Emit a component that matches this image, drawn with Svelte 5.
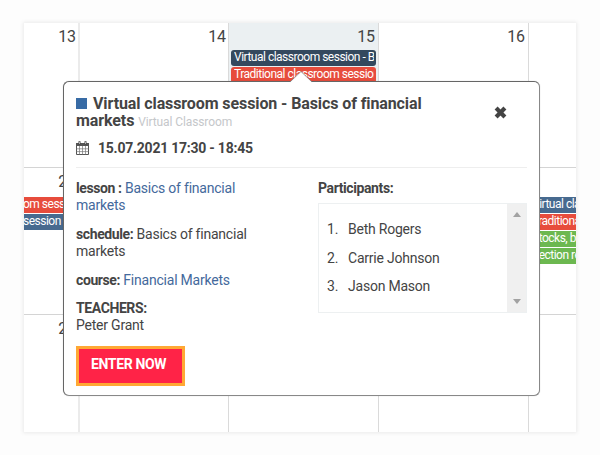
<script lang="ts">
  type CalendarEvent = { title: string; kind: 'session' | 'classroom' | 'webinar' | 'course' };
  type Day = { label: string; today?: boolean; events: CalendarEvent[] };

  const weeks: Day[][] = [
    [
      { label: '13', events: [] },
      { label: '14', events: [] },
      {
        label: '15',
        today: true,
        events: [
          { title: 'Virtual classroom session - Basics', kind: 'session' },
          { title: 'Traditional classroom session', kind: 'classroom' }
        ]
      },
      { label: '16', events: [] },
      { label: '', events: [] }
    ],
    [
      {
        label: '20',
        events: [
          { title: 'om session', kind: 'classroom' },
          { title: 'session - B', kind: 'webinar' }
        ]
      },
      { label: '', events: [] },
      { label: '', events: [] },
      { label: '', events: [] },
      {
        label: '',
        events: [
          { title: 'Virtual classroom', kind: 'webinar' },
          { title: 'Traditional', kind: 'classroom' },
          { title: 'Stocks, bonds', kind: 'course' },
          { title: 'Section review', kind: 'course' }
        ]
      }
    ],
    [
      { label: '27', events: [] },
      { label: '', events: [] },
      { label: '', events: [] },
      { label: '', events: [] },
      { label: '', events: [] }
    ]
  ];

  const participants = ['Beth Rogers', 'Carrie Johnson', 'Jason Mason'];

  let open = true;
</script>

<main>
  <div class="calendar">
    <div class="grid">
      {#each weeks as week}
        {#each week as day}
          <div class="day" class:today={day.today}>
            <div class="number">{day.label}</div>
            {#each day.events as event}
              <div class="event {event.kind}"><span>{event.title}</span></div>
            {/each}
          </div>
        {/each}
      {/each}
    </div>

    {#if open}
      <section class="popup">
        <svg class="caret" width="24" height="12" viewBox="0 0 24 12">
          <path d="M0 12 L1 11 L12 .5 L23 11 L24 12 Z" fill="#fff" />
          <path d="M1 11 L12 .5 L23 11" fill="none" stroke="#777" stroke-width=".7" />
        </svg>

        <header>
          <h2>
            <i class="swatch"></i>Virtual classroom session - Basics of financial markets
            <small>Virtual Classroom</small>
          </h2>
          <button class="close" aria-label="Close" on:click={() => (open = false)}>
            <svg width="13" height="13" viewBox="0 0 13 13">
              <path d="M2.1 2.1 L10.9 10.9 M10.9 2.1 L2.1 10.9" stroke="#444" stroke-width="4.2" />
            </svg>
          </button>
        </header>

        <div class="date">
          <svg width="13" height="14" viewBox="0 0 13 14">
            <path d="M.5 2.5h12v11H.5z" fill="#fff" stroke="#555" />
            <path d="M0 2h13v3H0z" fill="#555" />
            <path d="M3.5 5v8.5M6.5 5v8.5M9.5 5v8.5M.5 7.8h12M.5 10.6h12" stroke="#777" stroke-width=".7" />
            <path d="M3.5 .3v3.2M9.5 .3v3.2" stroke="#444" stroke-width="2" />
            <path d="M3.5 1v2M9.5 1v2" stroke="#ddd" stroke-width=".7" />
          </svg>
          <strong>15.07.2021 17:30 - 18:45</strong>
        </div>

        <div class="content">
          <div class="details">
            <p><strong>lesson :</strong> <a href="#lesson">Basics of financial markets</a></p>
            <p><strong>schedule:</strong> Basics of financial markets</p>
            <p class="course-name"><strong>course:</strong> <a href="#course">Financial Markets</a></p>
            <p><strong>TEACHERS:</strong><br />Peter Grant</p>
            <button class="enter">ENTER NOW</button>
          </div>

          <div class="participants">
            <strong>Participants:</strong>
            <div class="list">
              <ol>
                {#each participants as name, i}
                  <li><span>{i + 1}.</span>{name}</li>
                {/each}
              </ol>
              <div class="scrollbar">
                <i class="up"></i>
                <i class="down"></i>
              </div>
            </div>
          </div>
        </div>
      </section>
    {/if}
  </div>
</main>

<style>
  :global(body) {
    background: #fdfdfd;
  }

  main {
    box-sizing: border-box;
    height: 455px;
    padding: 23px 24px;
    overflow: hidden;
    font-family: Roboto, sans-serif;
    color: #444;
  }

  .calendar {
    position: relative;
    width: 552px;
    height: 409px;
    background: #fff;
    box-shadow: 0 0 4px 1px rgba(0, 0, 0, 0.08);
  }

  .grid {
    display: grid;
    grid-template-columns: 56px 149px 150px 150px 47px;
    grid-template-rows: 145px 147px 117px;
    height: 100%;
    overflow: hidden;
  }

  .day {
    box-sizing: border-box;
    min-width: 0;
    padding: 4px 2px 0;
    border-right: 1px solid #dadada;
    border-bottom: 1px solid #d4d4d4;
  }

  .day:nth-child(5n + 1) {
    padding-left: 0;
    border-right: 2px solid #ebebeb;
  }

  .day:nth-child(5n) {
    padding-right: 0;
    border-right: 0;
  }

  .day:nth-child(n + 11) {
    border-bottom: 0;
  }

  .day.today {
    background: #ebf0f2;
  }

  .number {
    height: 19px;
    margin-bottom: 4px;
    font-size: 16px;
    letter-spacing: -0.1px;
    line-height: 19px;
    text-align: right;
  }

  .day:nth-child(5n + 3) .number,
  .day:nth-child(5n + 4) .number {
    padding-right: 1px;
  }

  .day:nth-child(n + 6) .number {
    margin-bottom: 6px;
  }

  .event {
    height: 16px;
    margin-bottom: 1px;
    padding: 0 2px 0 3px;
    overflow: hidden;
    border-radius: 3px;
    color: #fff;
    font-size: 12px;
    letter-spacing: -0.5px;
    line-height: 15px;
    white-space: nowrap;
  }

  .event span {
    display: block;
    overflow: hidden;
  }

  .day:nth-child(5n + 1) .event {
    padding: 0;
    border-radius: 0;
    text-indent: -1px;
  }

  .day:nth-child(5n) .event {
    padding: 0 0 0 1px;
    border-radius: 3px 0 0 3px;
  }

  .session {
    background: #34495e;
  }

  .classroom {
    background: #e74c3c;
  }

  .webinar {
    background: #476a8f;
  }

  .course {
    background: #6cb850;
  }

  .popup {
    position: absolute;
    top: 58px;
    left: 39px;
    box-sizing: border-box;
    width: 477px;
    height: 315px;
    padding: 13px 12px;
    border: 1px solid #666;
    border-right-color: #888;
    border-bottom-color: #888;
    border-radius: 6px;
    background: #fff;
    box-shadow: 0 0 1px rgba(0, 0, 0, 0.3);
  }

  .caret {
    position: absolute;
    top: -11px;
    left: 225px;
  }

  header {
    display: flex;
    justify-content: space-between;
    padding-right: 20px;
  }

  h2 {
    width: 370px;
    height: 34px;
    margin: 0;
    font-size: 16px;
    font-weight: 700;
    letter-spacing: -0.1px;
    line-height: 17px;
  }

  .swatch {
    display: inline-block;
    width: 11px;
    height: 11px;
    margin-right: 6px;
    background: #386ba5;
  }

  small {
    color: #c5c7ca;
    font-size: 12px;
    font-weight: 400;
    letter-spacing: -0.1px;
  }

  button {
    border: 0;
    font-family: inherit;
  }

  .close {
    display: flex;
    align-self: flex-start;
    margin-top: 11px;
    padding: 0;
    background: none;
  }

  .date {
    display: flex;
    gap: 9px;
    box-sizing: border-box;
    height: 39px;
    padding: 12px 0 0;
    border-bottom: 1px solid #eee;
    font-size: 14px;
    letter-spacing: -0.24px;
    line-height: 15px;
  }

  .content {
    display: flex;
    padding-top: 12px;
    font-size: 14px;
    letter-spacing: -0.22px;
    line-height: 17px;
  }

  .details {
    width: 242px;
  }

  p {
    width: 185px;
    margin: 0 0 12px;
  }

  p strong,
  .participants strong {
    letter-spacing: -0.4px;
  }

  a {
    color: #44699c;
    text-decoration: none;
  }

  .course-name {
    margin-bottom: 11px;
  }

  .enter {
    width: 109px;
    height: 40px;
    padding: 0 0 4px 12px;
    border: 3px solid #ffa834;
    background: #ff2347;
    color: #fff;
    font-size: 14px;
    font-weight: 700;
    letter-spacing: -0.35px;
    text-align: left;
  }

  .participants {
    flex: 1;
  }

  .list {
    display: flex;
    box-sizing: border-box;
    height: 110px;
    margin-top: 6px;
    border: 1px solid #edf0f1;
  }

  ol {
    flex: 1;
    margin: 0;
    padding: 11px 8px;
    list-style: none;
  }

  li {
    display: flex;
    height: 28.5px;
    line-height: 28px;
  }

  li span {
    width: 21px;
  }

  .scrollbar {
    display: flex;
    flex-direction: column;
    justify-content: space-between;
    align-items: center;
    width: 19px;
    padding: 8px 0;
    background: #f0f0f0;
    box-sizing: border-box;
  }

  .up,
  .down {
    border: 4px solid transparent;
  }

  .up {
    border-top: 0;
    border-bottom: 5px solid #a2a2a2;
  }

  .down {
    border-bottom: 0;
    border-top: 5px solid #a2a2a2;
  }
</style>
